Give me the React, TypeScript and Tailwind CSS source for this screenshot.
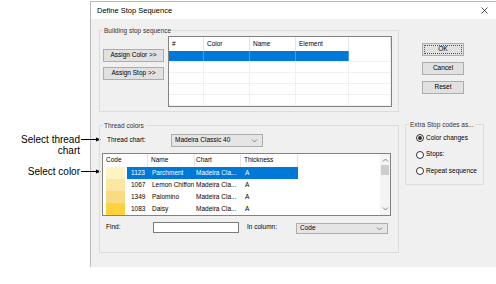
import type { ReactNode } from 'react';

const STOP_COLS = [
  { label: '#', w: 35 },
  { label: 'Color', w: 46 },
  { label: 'Name', w: 46 },
  { label: 'Element', w: 53 },
  { label: '', w: 42 },
];

const THREADS = [
  { code: '1123', name: 'Parchment', chart: 'Madeira Cla...', thick: 'A', swatch: '#fdf3c4' },
  { code: '1067', name: 'Lemon Chiffon', chart: 'Madeira Cla...', thick: 'A', swatch: '#fbe7a2' },
  { code: '1349', name: 'Palomino', chart: 'Madeira Cla...', thick: 'A', swatch: '#f8dc84' },
  { code: '1083', name: 'Daisy', chart: 'Madeira Cla...', thick: 'A', swatch: '#fed23a' },
];

function Chevron({ up = false }: { up?: boolean }) {
  return (
    <svg width="7" height="4" viewBox="0 0 7 4" className="shrink-0">
      <path d={up ? 'M1 3.5 3.5 1 6 3.5' : 'M1 0.5 3.5 3 6 0.5'} fill="none" stroke="#6b6b6b" strokeWidth="0.8" />
    </svg>
  );
}

function GroupBox({ label, className, children }: { label: string; className: string; children: ReactNode }) {
  return (
    <div className={`relative border border-[#dcdcdc] ${className}`}>
      <span className="absolute -top-[5px] left-[3px] bg-[#f0f0f0] px-[1px] leading-[9px] text-[#333]">{label}</span>
      {children}
    </div>
  );
}

function WinButton({ children, className = '' }: { children: ReactNode; className?: string }) {
  return (
    <div className={`flex h-[13px] items-center justify-center border border-[#adadad] bg-[#e1e1e1] ${className}`}>
      {children}
    </div>
  );
}

function Combo({ text, className }: { text: string; className: string }) {
  return (
    <div className={`flex items-center justify-between border border-[#adadad] bg-[#e5e5e5] pl-[3px] pr-[4px] ${className}`}>
      <span>{text}</span>
      <Chevron />
    </div>
  );
}

function Radio({ label, checked = false }: { label: string; checked?: boolean }) {
  return (
    <div className="flex h-[10px] items-center gap-[2px]">
      <span className="flex h-[8px] w-[8px] items-center justify-center rounded-full border border-[#333] bg-white">
        {checked && <span className="h-[4px] w-[4px] rounded-full bg-[#333]" />}
      </span>
      <span>{label}</span>
    </div>
  );
}

function Arrow() {
  return (
    <svg width="20" height="5" viewBox="0 0 20 5">
      <line x1="0" y1="2.5" x2="16" y2="2.5" stroke="#000" strokeWidth="1" />
      <path d="M15 0.5 20 2.5 15 4.5Z" fill="#000" />
    </svg>
  );
}

function StopTable() {
  return (
    <div className="ml-[4px] h-[71px] w-[224px] border border-[#828282] bg-white">
      <div className="flex h-[14px]">
        {STOP_COLS.map((c, i) => (
          <div key={i} style={{ width: c.w }} className="flex items-center border-r border-[#e5e5e5] pl-[3px]">
            {c.label}
          </div>
        ))}
      </div>
      {[0, 1, 2, 3, 4].map((r) => (
        <div key={r} className="flex h-[11px] border-b border-[#f0f0f0]">
          {STOP_COLS.map((c, i) => (
            <div
              key={i}
              style={{ width: c.w }}
              className={r === 0 && i < 4 ? 'border-r border-[#4a9be4] bg-[#0078d7]' : 'border-r border-[#f0f0f0]'}
            />
          ))}
        </div>
      ))}
    </div>
  );
}

function ThreadList() {
  return (
    <div className="ml-[2px] mt-[6px] flex h-[63px] w-[289px] border border-[#828282] bg-white">
      <div className="flex-1">
        <div className="flex h-[13px]">
          <div className="flex w-[45px] items-center border-r border-[#e5e5e5] pl-[3px]">Code</div>
          <div className="flex w-[47px] items-center border-r border-[#e5e5e5] pl-[3px]">Name</div>
          <div className="flex w-[46px] items-center border-r border-[#e5e5e5] pl-[1px]">Chart</div>
          <div className="flex w-[57px] items-center border-r border-[#e5e5e5] pl-[3px]">Thickness</div>
        </div>
        {THREADS.map((t, i) => (
          <div key={t.code} className="flex h-[12px] pl-[3px]">
            <div style={{ background: t.swatch }} className="w-[19px]" />
            <div className={`ml-[2px] flex items-center ${i === 0 ? 'bg-[#0078d7] text-white' : ''}`}>
              <span className="w-[21px] pl-[4px]">{t.code}</span>
              <span className="w-[47px] whitespace-nowrap pl-[4px]">{t.name}</span>
              <span className="w-[46px] whitespace-nowrap pl-[1px]">{t.chart}</span>
              <span className="w-[57px] pl-[4px]">{t.thick}</span>
            </div>
          </div>
        ))}
      </div>
      <div className="flex w-[10px] flex-col items-center bg-[#f4f4f4] py-[4px]">
        <Chevron up />
        <div className="mt-[3px] h-[10px] w-[8px] bg-[#cdcdcd]" />
        <div className="flex-1" />
        <Chevron />
      </div>
    </div>
  );
}

export default function App() {
  return (
    <div className="relative h-[284px] w-[496px] overflow-hidden bg-white font-['Liberation_Sans',Arial,sans-serif]">
      {/* callouts */}
      <div className="absolute left-0 top-[134px] flex w-[101px] items-start text-[10px] leading-[11px] text-black">
        <div className="w-[80px] text-right">
          Select thread
          <br />
          chart
        </div>
        <div className="ml-[1px] mt-[3px]">
          <Arrow />
        </div>
      </div>
      <div className="absolute left-0 top-[166px] flex w-[101px] items-start text-[10px] leading-[11px] text-black">
        <div className="w-[80px] text-right">Select color</div>
        <div className="ml-[1px] mt-[3px]">
          <Arrow />
        </div>
      </div>

      {/* dialog */}
      <div className="ml-[90px] mt-[1px] w-[406px] border-l border-t border-[#b9b9b9] text-[6.5px] leading-none text-black">
        <div className="flex h-[17px] items-center justify-between bg-white pl-[6px] pr-[8px] text-[7.5px]">
          <span>Define Stop Sequence</span>
          <svg width="7" height="7" viewBox="0 0 7 7">
            <path d="M0.5 0.5 6.5 6.5M6.5 0.5 0.5 6.5" stroke="#222" strokeWidth="0.8" />
          </svg>
        </div>
        <div className="flex h-[248px] bg-[#f0f0f0] pl-[8px]">
          <div className="w-[300px] pt-[11px]">
            <GroupBox label="Building stop sequence" className="h-[82px]">
              <div className="flex items-start pl-[3px] pt-[5px]">
                <div className="mt-[13px] flex w-[61px] flex-col gap-[5px]">
                  <WinButton>Assign Color &gt;&gt;</WinButton>
                  <WinButton>Assign Stop &gt;&gt;</WinButton>
                </div>
                <StopTable />
              </div>
            </GroupBox>
            <GroupBox label="Thread colors" className="mt-[13px] h-[128px]">
              <div className="flex items-center pl-[7px] pt-[8px]">
                <span className="w-[64px]">Thread chart:</span>
                <Combo text="Madeira Classic 40" className="h-[13px] w-[92px]" />
              </div>
              <ThreadList />
              <div className="mt-[6px] flex items-start pl-[6px]">
                <span className="mt-[2px] w-[47px]">Find:</span>
                <div className="h-[11px] w-[86px] border border-[#7a7a7a] bg-white" />
                <span className="ml-[8px] mt-[2px] w-[49px]">In column:</span>
                <Combo text="Code" className="mt-[1px] h-[11px] w-[92px]" />
              </div>
            </GroupBox>
          </div>
          <div className="ml-[6px] w-[79px] pt-[24px]">
            <div className="ml-[17px] flex w-[42px] flex-col gap-[6px]">
              <WinButton className="border-[#0078d7]">
                <span className="flex h-[9px] w-[38px] items-center justify-center border border-dotted border-[#555]">OK</span>
              </WinButton>
              <WinButton>Cancel</WinButton>
              <WinButton>Reset</WinButton>
            </div>
            <GroupBox label="Extra Stop codes as..." className="mt-[30px] h-[61px]">
              <div className="flex flex-col gap-[6.5px] pl-[10px] pt-[8px]">
                <Radio label="Color changes" checked />
                <Radio label="Stops:" />
                <Radio label="Repeat sequence" />
              </div>
            </GroupBox>
          </div>
        </div>
      </div>
    </div>
  );
}
